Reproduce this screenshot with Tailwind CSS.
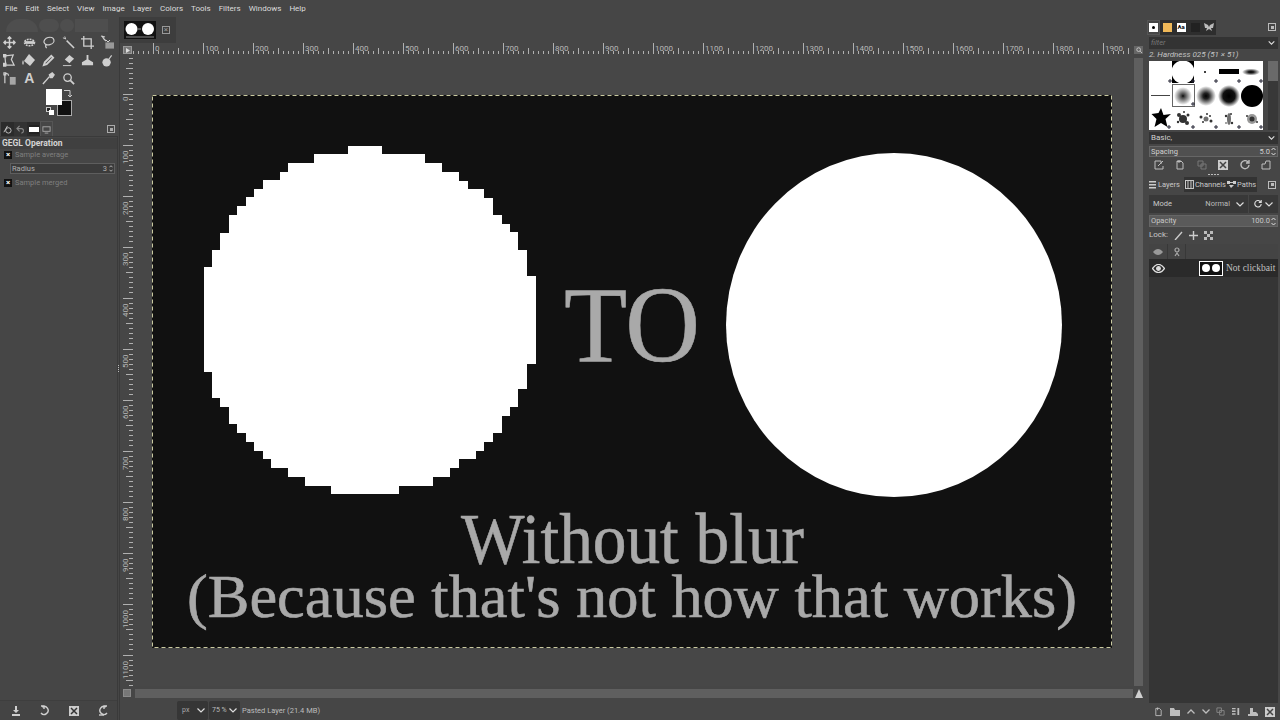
<!DOCTYPE html>
<html lang="en">
<head>
  <meta charset="UTF-8">
  <title>GIMP</title>
  <script src="https://cdn.jsdelivr.net/npm/@tailwindcss/browser@4"></script>
</head>
<body class="bg-[#464646]">
<div class="w-[1280px] h-[720px] overflow-hidden flex flex-col bg-[#464646] text-[#d0d0d0] font-['Roboto',sans-serif] text-[7.5px]">

  <!-- menu -->
  <div class="h-[17px] shrink-0 flex items-center gap-[8px] pl-[5px] text-[8px] text-[#dcdcdc]">
    <span>File</span><span>Edit</span><span>Select</span><span>View</span><span>Image</span><span>Layer</span><span>Colors</span><span>Tools</span><span>Filters</span><span>Windows</span><span>Help</span>
  </div>

  <div class="flex flex-1 min-h-0">

    <!-- left dock -->
    <aside class="w-[118px] shrink-0 flex flex-col">
      <div class="h-[16px] shrink-0 flex items-center gap-[1px] pl-[6px] opacity-40">
        <div class="w-[32px] h-[13px] rounded-t-full bg-[#5a5a5a]"></div>
        <div class="w-[20px] h-[13px] rounded-full bg-[#5a5a5a]"></div>
        <div class="w-[14px] h-[13px] rounded-full bg-[#5a5a5a]"></div>
        <div class="w-[33px] h-[13px] bg-[#5a5a5a]"></div>
      </div>
      <!-- tools -->
      <div class="grid grid-cols-6 w-[117px] auto-rows-[18px] text-[#cfcfcf]">
        <div class="flex items-center justify-center"><svg class="w-[13px] h-[13px]" viewBox="0 0 14 14" fill="none" stroke="currentColor" stroke-width="1.6"><path d="M7 1v12M1 7h12M5 3l2-2 2 2M5 11l2 2 2-2M3 5L1 7l2 2M11 5l2 2-2 2"/></svg></div>
        <div class="flex items-center justify-center"><svg class="w-[13px] h-[13px]" viewBox="0 0 14 14" fill="none" stroke="currentColor" stroke-width="1.5"><ellipse cx="7" cy="7" rx="5.5" ry="3.5" stroke-dasharray="2 1"/><path d="M2 7h10" stroke-width="3"/></svg></div>
        <div class="flex items-center justify-center"><svg class="w-[13px] h-[13px]" viewBox="0 0 14 14" fill="none" stroke="currentColor" stroke-width="1.3"><ellipse cx="7.5" cy="5.5" rx="5.5" ry="4" transform="rotate(-15 7.5 5.5)"/><path d="M5 9c-2 1-1 3 0 4"/></svg></div>
        <div class="flex items-center justify-center"><svg class="w-[13px] h-[13px]" viewBox="0 0 14 14" fill="none" stroke="currentColor" stroke-width="1.6"><path d="M5 5l8 8"/><path d="M1 2l3 1M3 0.500l1 3" stroke-width="1"/></svg></div>
        <div class="flex items-center justify-center"><svg class="w-[13px] h-[13px]" viewBox="0 0 14 14" fill="none" stroke="currentColor" stroke-width="1.4"><path d="M3 0v11h11M0 3h11v11"/></svg></div>
        <div class="flex items-center justify-center"><svg class="w-[14px] h-[14px]" viewBox="0 0 14 14" fill="none" stroke="currentColor" stroke-width="1.2"><path d="M1 1l4 1M2 1l2 3l2 2"/><rect x="6" y="8" width="8" height="5" fill="currentColor" opacity=".6"/><path d="M6 5l2 2l2-2" stroke-width="1"/></svg></div>

        <div class="flex items-center justify-center"><svg class="w-[13px] h-[13px]" viewBox="0 0 14 14" fill="none" stroke="currentColor" stroke-width="1.3"><path d="M2 2l9-1l-2 5l3 6l-9 0z"/><path d="M0 0h3v3H0zM0 10h3v3H0z" fill="currentColor"/></svg></div>
        <div class="flex items-center justify-center"><svg class="w-[14px] h-[14px]" viewBox="0 0 14 14" fill="currentColor"><path d="M7 1l6 6-5 6-6-5z"/><path d="M1 7c-1 2-1 4 0 5 1-1 1-3 0-5z"/></svg></div>
        <div class="flex items-center justify-center"><svg class="w-[13px] h-[13px]" viewBox="0 0 14 14" fill="none" stroke="currentColor" stroke-width="2"><path d="M2 12l1-3 7-7 2 2-7 7z"/></svg></div>
        <div class="flex items-center justify-center"><svg class="w-[13px] h-[13px]" viewBox="0 0 14 14" fill="currentColor"><path d="M8 1l5 4-5 5-5-4z"/><path d="M1 12h9v1H1z"/></svg></div>
        <div class="flex items-center justify-center"><svg class="w-[13px] h-[13px]" viewBox="0 0 14 14" fill="currentColor"><path d="M6 1h2v5l5 3v3H1V9l5-3z"/></svg></div>
        <div class="flex items-center justify-center"><svg class="w-[13px] h-[13px]" viewBox="0 0 14 14" fill="currentColor"><circle cx="6" cy="9" r="4.500"/><path d="M8 5l3-4 1 1-3 4z"/></svg></div>

        <div class="flex items-center justify-center"><svg class="w-[13px] h-[13px]" viewBox="0 0 14 14" fill="none" stroke="currentColor" stroke-width="1.3"><path d="M2 12V3c0-2 4-2 4 1"/><path d="M1 1h2v2H1z"/><rect x="8" y="6" width="5" height="7" fill="currentColor" opacity=".7"/></svg></div>
        <div class="flex items-center justify-center"><span class="font-['Liberation_Sans',sans-serif] font-bold text-[14px] leading-none">A</span></div>
        <div class="flex items-center justify-center"><svg class="w-[13px] h-[13px]" viewBox="0 0 14 14" fill="none" stroke="currentColor" stroke-width="1.500"><path d="M1 13l7-8"/><path d="M8 3l3-2 2 2-2 3-2 0z" fill="currentColor"/></svg></div>
        <div class="flex items-center justify-center"><svg class="w-[13px] h-[13px]" viewBox="0 0 14 14" fill="none" stroke="currentColor" stroke-width="1.400"><circle cx="6" cy="6" r="4"/><path d="M9 9l4 4" stroke-width="2"/></svg></div>
      </div>
      <!-- colours -->
      <div class="relative h-[30px] mt-[2px] ml-[46px] w-[28px] shrink-0">
        <div class="absolute left-[11px] top-[11px] w-[15px] h-[16px] bg-[#111] border border-[#aaa]"></div>
        <div class="absolute left-0 top-0 w-[16px] h-[16px] bg-white"></div>
        <svg class="absolute left-[18px] top-0 w-[8px] h-[9px]" viewBox="0 0 8 9" fill="none" stroke="#ccc"><path d="M0 1.500h6v6M4 6l2 2 2-2"/></svg>
        <div class="absolute left-0 top-[18px] w-[5px] h-[5px] border border-[#ccc] bg-[#222]"></div>
        <div class="absolute left-[3px] top-[21px] w-[5px] h-[5px] bg-white"></div>
      </div>
      <!-- dock tabs -->
      <div class="h-[14px] mt-[3px] shrink-0 flex items-center pl-[1px]">
        <div class="w-[13px] h-[14px] bg-[#2b2b2b] flex items-center justify-center"><svg class="w-[9px] h-[9px]" viewBox="0 0 10 10" fill="none" stroke="#ccc"><circle cx="6" cy="6" r="3"/><path d="M1 8L5 1"/></svg></div>
        <div class="w-[13px] h-[14px] bg-[#333] flex items-center justify-center"><svg class="w-[9px] h-[9px]" viewBox="0 0 10 10" fill="none" stroke="#888" stroke-width="1.200"><path d="M4 1L1 4l3 3M1 4h5c3 0 3 5 0 5"/></svg></div>
        <div class="w-[13px] h-[14px] bg-[#2b2b2b] flex items-center justify-center"><div class="w-[10px] h-[9px] bg-white border-y-2 border-[#222]"></div></div>
        <div class="w-[13px] h-[16px] bg-[#464646] border border-b-0 border-[#555] flex items-center justify-center"><svg class="w-[9px] h-[9px]" viewBox="0 0 10 10" fill="none" stroke="#aaa"><rect x="1" y="2" width="8" height="5"/><path d="M3 9h4"/></svg></div>
        <div class="ml-auto mr-[3px] w-[8px] h-[8px] border border-[#aaa] flex items-center justify-center"><div class="w-[3px] h-[3px] bg-[#aaa]"></div></div>
      </div>
      <!-- gegl panel -->
      <div class="border-t border-r border-[#3a3a3a] flex-1 flex flex-col min-h-0">
        <div class="h-[11px] mt-[1px] pl-[2px] bg-[#404040] font-bold text-[8.5px] text-[#d4d4d4] flex items-center">GEGL Operation</div>
        <div class="h-[12px] pl-[4px] flex items-center gap-[3px] text-[#7f7f7f]"><span class="w-[8px] h-[8px] bg-[#111] text-white flex items-center justify-center text-[8px] font-bold leading-none">×</span>Sample average</div>
        <div class="h-[11px] ml-[10px] mr-[2px] mt-[2px] px-[1px] bg-[#3b3b3b] border border-[#5e5e5e] flex items-center justify-between text-[#b0b0b0]"><span>Radius</span><span class="flex items-center gap-[2px]">3<svg class="w-[4px] h-[9px]" viewBox="0 0 5 9" fill="none" stroke="#ccc"><path d="M0.500 3l2-2 2 2M0.500 6l2 2 2-2"/></svg></span></div>
        <div class="h-[12px] mt-[3px] pl-[4px] flex items-center gap-[3px] text-[#7f7f7f]"><span class="w-[8px] h-[8px] bg-[#111] text-white flex items-center justify-center text-[8px] font-bold leading-none">×</span>Sample merged</div>
        <div class="mt-auto h-[20px] border-t border-[#3e3e3e] bg-[#444] flex items-center text-[#cfcfcf] pl-[10px] gap-[17px]">
          <svg class="w-[12px] h-[12px]" viewBox="0 0 12 12" fill="currentColor"><path d="M5 1h2v4h2L6 8 3 5h2zM2 9h8v2H2z"/></svg>
          <svg class="w-[12px] h-[12px]" viewBox="0 0 12 12" fill="none" stroke="currentColor" stroke-width="1.400"><path d="M2 1h3v3M3 2a4 4 0 1 1-1 6"/></svg>
          <svg class="w-[12px] h-[12px]" viewBox="0 0 12 12"><rect x="1" y="1" width="10" height="10" fill="#ccc"/><path d="M3 3l6 6M9 3l-6 6" stroke="#333" stroke-width="1.500"/></svg>
          <svg class="w-[12px] h-[12px]" viewBox="0 0 12 12" fill="none" stroke="currentColor" stroke-width="1.400"><path d="M10 1H7v3M9 2a4 4 0 1 0 1 6"/><path d="M2 10h5"/></svg>
        </div>
      </div>
    </aside>

    <!-- sash -->
    <div class="w-[2px] shrink-0 flex flex-col items-center justify-center gap-[1px] border-r border-[#3a3a3a]">
      <i class="w-[1px] h-[1px] bg-[#bbb]"></i><i class="w-[1px] h-[1px] bg-[#bbb]"></i><i class="w-[1px] h-[1px] bg-[#bbb]"></i><i class="w-[1px] h-[1px] bg-[#bbb]"></i>
    </div>

    <!-- centre -->
    <main class="w-[1026px] shrink-0 flex flex-col">
      <!-- image tab -->
      <div class="h-[26px] shrink-0 flex">
        <div class="w-[56px] h-[26px] bg-[#3d3d3d] flex items-center gap-[6px] pl-[4px]">
          <svg class="w-[32px] h-[18px]" viewBox="0 0 32 18"><rect width="32" height="18" fill="#111"/><circle cx="7.500" cy="8" r="6" fill="#fff"/><circle cx="24" cy="8" r="6" fill="#fff"/><path d="M14 8h3" stroke="#999"/><path d="M2 16h28" stroke="#888"/></svg>
          <div class="w-[8px] h-[8px] border border-[#999] flex items-center justify-center text-[#999] text-[8px] leading-none">×</div>
        </div>
      </div>
      <!-- ruler row -->
      <div class="h-[11px] shrink-0 flex">
        <div class="w-[13px] shrink-0 pl-[3px] pt-[3px]"><div class="w-[9px] h-[8px] bg-[#777] border border-[#999] flex items-center justify-center"><svg class="w-[4px] h-[5px]" viewBox="0 0 4 5" fill="#ddd"><path d="M0 0l4 2.500L0 5z"/></svg></div></div>
        <svg class="w-[1000px] h-[11px] shrink-0" viewBox="0 0 1000 11" fill="#b8b8b8" font-size="8">
          <defs><pattern id="tx" x="20" y="0" width="50" height="11" patternUnits="userSpaceOnUse"><path d="M.5 0v11M5.500 8v3M10.500 8v3M15.500 8v3M20.500 8v3M25.500 5v6M30.500 8v3M35.500 8v3M40.500 8v3M45.500 8v3" stroke="#b0b0b0"/></pattern></defs>
          <rect width="1000" height="11" fill="url(#tx)"/>
          <text x="22" y="8">0</text><text x="72" y="8">100</text><text x="122" y="8">200</text><text x="172" y="8">300</text><text x="222" y="8">400</text><text x="272" y="8">500</text><text x="322" y="8">600</text><text x="372" y="8">700</text><text x="422" y="8">800</text><text x="472" y="8">900</text><text x="522" y="8">1000</text><text x="572" y="8">1100</text><text x="622" y="8">1200</text><text x="672" y="8">1300</text><text x="722" y="8">1400</text><text x="772" y="8">1500</text><text x="822" y="8">1600</text><text x="872" y="8">1700</text><text x="922" y="8">1800</text><text x="972" y="8">1900</text>
        </svg>
        <div class="ml-[1px] mt-[3px] w-[9px] h-[8px] bg-[#666] flex items-center justify-center"><svg class="w-[6px] h-[6px]" viewBox="0 0 8 8" fill="none" stroke="#ddd"><circle cx="3.500" cy="3.500" r="2.500"/><path d="M5.500 5.500L8 8"/></svg></div>
      </div>
      <!-- canvas row -->
      <div class="flex h-[632px] shrink-0">
        <svg class="w-[13px] h-[632px] shrink-0" viewBox="0 0 13 632" fill="#b8b8b8" font-size="8">
          <defs><pattern id="ty" x="0" y="-11" width="13" height="51" patternUnits="userSpaceOnUse"><path d="M3 .5h10M9 5.500h4M9 10.500h4M9 15.500h4M9 20.500h4M6 25.500h7M9 30.500h4M9 35.500h4M9 40.500h4M9 45.500h4" stroke="#b0b0b0"/></pattern></defs>
          <rect width="13" height="632" fill="url(#ty)"/>
          <text transform="translate(8 47) rotate(-90)">0</text><text transform="translate(8 110) rotate(-90)">100</text><text transform="translate(8 161) rotate(-90)">200</text><text transform="translate(8 212) rotate(-90)">300</text><text transform="translate(8 263) rotate(-90)">400</text><text transform="translate(8 314) rotate(-90)">500</text><text transform="translate(8 365) rotate(-90)">600</text><text transform="translate(8 416) rotate(-90)">700</text><text transform="translate(8 467) rotate(-90)">800</text><text transform="translate(8 518) rotate(-90)">900</text><text transform="translate(8 574) rotate(-90)">1000</text><text transform="translate(8 625) rotate(-90)">1100</text>
        </svg>
        <div class="w-[1000px] h-[632px] shrink-0 pl-[19px] pt-[41px] bg-[#474747]">
          <!-- the opened image, in page coordinates -->
          <svg class="w-[960px] h-[553px] block" viewBox="152 95 960 553">
            <rect x="152" y="95" width="960" height="553" fill="#111"/>
            <rect x="152.500" y="95.500" width="959" height="552" fill="none" stroke="#c9c9a0" stroke-dasharray="4 3"/>
            <path fill="#fff" d="M348 146H382V154H425V163H442V172H459V181H468V189H484V198H493V215H502V224H510V232H518V250H527V276H536V364H527V389H518V407H510V416H502V433H493V442H484V451H476V459H459V468H450V477H433V486H399V494H331V486H305V477H288V468H271V459H263V451H254V442H246V433H237V424H229V407H220V398H212V372H204V267H212V250H220V233H229V215H237V206H246V197H254V189H263V180H280V172H288V163H314V154H348Z"/>
            <ellipse cx="894" cy="325" rx="168" ry="172" fill="#fff"/>
            <g fill="#a9a9a9" stroke="#a9a9a9" stroke-width=".6" class="font-['Liberation_Serif',serif]">
              <text x="564" y="361" font-size="108" textLength="136" lengthAdjust="spacingAndGlyphs">TO</text>
              <text x="461" y="563" font-size="72" textLength="343" lengthAdjust="spacingAndGlyphs">Without blur</text>
              <text x="187" y="617" font-size="62" textLength="890" lengthAdjust="spacingAndGlyphs">(Because that's not how that works)</text>
            </g>
          </svg>
        </div>
        <div class="ml-[1px] mt-[4px] w-[9px] h-[628px] bg-[#5f5f5f]"></div>
      </div>
      <!-- h scroll -->
      <div class="h-[10px] mt-[2px] shrink-0 flex items-center">
        <div class="ml-[3px] w-[8px] h-[8px] bg-[#777] border border-[#8a8a8a]"></div>
        <div class="ml-[4px] w-[998px] h-[9px] bg-[#5f5f5f]"></div>
        <svg class="ml-[1px] w-[10px] h-[9px]" viewBox="0 0 10 9" fill="#d0d0d0"><path d="M5 0l4 9H1z"/></svg>
      </div>
      <!-- status -->
      <div class="flex-1 flex items-end pl-[57px] text-[#bdbdbd]">
        <div class="w-[31px] h-[19px] bg-[#363636] rounded-[2px] flex items-center justify-between pl-[5px] pr-[3px] text-[7px] text-[#aaa]">px<svg class="w-[8px] h-[5px]" viewBox="0 0 8 5" fill="none" stroke="#ddd" stroke-width="1.200"><path d="M0.500 0.500L4 4l3.500-3.500"/></svg></div>
        <div class="ml-[1px] w-[31px] h-[19px] bg-[#363636] rounded-[2px] flex items-center justify-between pl-[3px] pr-[3px] text-[7px] text-[#bbb]">75 %<svg class="w-[8px] h-[5px]" viewBox="0 0 8 5" fill="none" stroke="#ddd" stroke-width="1.200"><path d="M0.500 0.500L4 4l3.500-3.500"/></svg></div>
        <span class="ml-[2px] h-[19px] flex items-center text-[7.5px]">Pasted Layer (21.4 MB)</span>
      </div>
    </main>

    <!-- right dock -->
    <aside class="w-[134px] shrink-0 pl-[1px] flex flex-col text-[#c8c8c8]">
      <!-- brush tabs -->
      <div class="h-[16px] mt-[2px] shrink-0 flex items-center">
        <div class="w-[13px] h-[15px] bg-[#464646] border border-[#555] flex items-center justify-center"><div class="w-[9px] h-[9px] bg-white flex items-center justify-center"><div class="w-[3px] h-[3px] rounded-full bg-black"></div></div></div>
        <div class="w-[14px] h-[15px] bg-[#2e2e2e] flex items-center justify-center"><div class="w-[9px] h-[9px] bg-[#f0b858]"></div></div>
        <div class="w-[14px] h-[15px] bg-[#2e2e2e] flex items-center justify-center"><div class="w-[9px] h-[9px] bg-white text-black text-[6px] font-bold leading-none flex items-center justify-center">Aa</div></div>
        <div class="w-[14px] h-[15px] bg-[#2e2e2e] flex items-center justify-center"><div class="w-[9px] h-[9px] bg-[#222]"></div></div>
        <div class="w-[14px] h-[15px] bg-[#2e2e2e] flex items-center justify-center"><svg class="w-[10px] h-[10px]" viewBox="0 0 10 10" fill="#bbb"><path d="M0 1l4 2 1 2 1-2 4-2-1 5-2 0 1 3-3-2-3 2 1-3-2 0z"/></svg></div>
        <div class="ml-auto mr-[4px] w-[8px] h-[8px] border border-[#bbb] flex items-center justify-center"><div class="w-[3px] h-[3px] bg-[#bbb]"></div></div>
      </div>
      <div class="h-[12px] mt-[2px] mx-[2px] bg-[#333] flex items-center justify-between pl-[2px] pr-[3px] italic text-[#777]">filter<svg class="w-[7px] h-[4px]" viewBox="0 0 8 5" fill="none" stroke="#ddd" stroke-width="1.400"><path d="M0.500 0.500L4 4l3.500-3.500"/></svg></div>
      <div class="h-[12px] ml-[2px] flex items-center italic text-[8px] text-[#c4c4c4]">2. Hardness 025 (51 × 51)</div>
      <!-- brush grid -->
      <div class="h-[70px] ml-[2px] flex shrink-0">
        <svg class="w-[114px] h-[69px] bg-white" viewBox="0 0 114 69">
          <defs>
            <radialGradient id="s1"><stop offset="0" stop-color="#000"/><stop offset=".12" stop-color="#333"/><stop offset="1" stop-color="#fff"/></radialGradient>
            <radialGradient id="s2"><stop offset="0" stop-color="#000"/><stop offset=".3" stop-color="#222"/><stop offset="1" stop-color="#fff"/></radialGradient>
            <radialGradient id="s3"><stop offset="0" stop-color="#000"/><stop offset=".55" stop-color="#111"/><stop offset="1" stop-color="#fff"/></radialGradient>
          </defs>
          <rect x="23" y="0" width="22" height="22" fill="#000"/>
          <circle cx="34" cy="11" r="11.500" fill="#fff"/>
          <circle cx="56" cy="11" r="1" fill="#000"/>
          <rect x="70" y="8" width="20" height="5" fill="#000"/>
          <ellipse cx="102" cy="11" rx="9" ry="3.500" fill="url(#s2)"/>
          <path d="M2 34.500h19" stroke="#444"/>
          <rect x="23.500" y="23.500" width="22" height="22" fill="#fff" stroke="#666"/>
          <circle cx="34" cy="35" r="9" fill="url(#s1)"/>
          <circle cx="57" cy="35" r="10" fill="url(#s2)"/>
          <circle cx="80" cy="35" r="11" fill="url(#s3)"/>
          <circle cx="103" cy="35" r="11" fill="#000"/>
          <path d="M12 47l2.500 7 7.500-1-5.500 5 2 8-6.500-4-6.500 4 2-8-5-5 7-1z" fill="#000"/>
          <g fill="#333">
            <circle cx="34" cy="58" r="4"/><circle cx="30" cy="54" r="2"/><circle cx="38" cy="62" r="2"/><circle cx="39" cy="54" r="1.500"/><circle cx="29" cy="61" r="1.200"/><circle cx="35" cy="51" r="1"/>
            <circle cx="57" cy="58" r="2.500" opacity=".7"/><circle cx="52" cy="56" r="1.500"/><circle cx="62" cy="60" r="1.500"/><circle cx="58" cy="53" r="1"/><circle cx="54" cy="61" r="1"/><circle cx="61" cy="55" r="1"/>
            <ellipse cx="80" cy="58" rx="2" ry="6" opacity=".7"/><circle cx="77" cy="55" r="1.200"/><circle cx="83" cy="62" r="1.200"/><circle cx="82" cy="53" r="1"/><circle cx="77" cy="62" r=".8"/>
            <circle cx="103" cy="58" r="5" opacity=".5"/><circle cx="103" cy="58" r="2.500"/><circle cx="98" cy="55" r="1"/><circle cx="108" cy="61" r="1"/>
          </g>
          <path d="M19 20h4M21 18v4M42 20h4M44 18v4M65 20h4M67 18v4M88 20h4M90 18v4M110 20h4M112 18v4M42 43h4M44 41v4M18 66h4M20 64v4M42 66h4M44 64v4M65 66h4M67 64v4M88 66h4M90 64v4M110 66h4M112 64v4" stroke="#223" fill="none"/>
        </svg>
        <div class="ml-[5px] w-[10px] h-[69px] bg-[#383838]"><div class="h-[20px] bg-[#6a6a6a]"></div></div>
      </div>
      <div class="h-[12px] mt-[1px] mx-[2px] bg-[#333] flex items-center justify-between pl-[2px] pr-[3px] text-[8px] text-[#d0d0d0]">Basic,<svg class="w-[7px] h-[4px]" viewBox="0 0 8 5" fill="none" stroke="#ddd" stroke-width="1.400"><path d="M0.500 0.500L4 4l3.500-3.500"/></svg></div>
      <div class="h-[11px] mt-[2px] mx-[2px] bg-[#505050] border border-[#666] flex items-center justify-between px-[1px] text-[#d0d0d0]"><span>Spacing</span><span class="flex items-center gap-[1px]">5.0<svg class="w-[5px] h-[9px]" viewBox="0 0 5 9" fill="none" stroke="#ddd"><path d="M0.500 3l2-2 2 2M0.500 6l2 2 2-2"/></svg></span></div>
      <!-- brush actions -->
      <div class="h-[14px] mt-[1px] shrink-0 flex items-center justify-between pl-[7px] pr-[9px] text-[#bdbdbd]">
        <svg class="w-[10px] h-[10px]" viewBox="0 0 10 10" fill="none" stroke="currentColor"><path d="M1 1h6v3M1 1v8h8V6M4 6l5-5"/></svg>
        <svg class="w-[10px] h-[10px]" viewBox="0 0 10 10" fill="none" stroke="currentColor"><path d="M2 1h4l2 2v6H2zM4 0v3M2 1.500h4"/></svg>
        <svg class="w-[10px] h-[10px]" viewBox="0 0 10 10" fill="none" stroke="#777"><path d="M1 1h5v5H1zM4 4h5v5H4z"/></svg>
        <svg class="w-[10px] h-[10px]" viewBox="0 0 10 10"><rect width="10" height="10" fill="#ccc"/><path d="M2 2l6 6M8 2L2 8" stroke="#444" stroke-width="1.500"/></svg>
        <svg class="w-[10px] h-[10px]" viewBox="0 0 10 10" fill="none" stroke="currentColor" stroke-width="1.400"><path d="M9 5a4 4 0 1 1-1-3M9 0v3H6"/></svg>
        <svg class="w-[10px] h-[10px]" viewBox="0 0 10 10" fill="none" stroke="currentColor"><path d="M1 9V4h3l1-3h4v8z"/></svg>
      </div>
      <div class="h-[5px] shrink-0 flex items-center justify-center gap-[1px]"><i class="w-[2px] h-[1px] bg-[#bbb]"></i><i class="w-[2px] h-[1px] bg-[#bbb]"></i><i class="w-[2px] h-[1px] bg-[#bbb]"></i><i class="w-[2px] h-[1px] bg-[#bbb]"></i></div>
      <!-- layer tabs -->
      <div class="h-[15px] shrink-0 flex items-center pl-[1px]">
        <div class="w-[36px] h-[15px] bg-[#464646] flex items-center gap-[2px] pl-[1px]"><svg class="w-[7px] h-[9px]" viewBox="0 0 7 9" fill="#ccc"><path d="M0 1h7v1.500H0zM0 4h7v1.500H0zM0 7h7v1.500H0z"/></svg>Layers</div>
        <div class="w-[42px] h-[15px] bg-[#333] flex items-center gap-[1px] pl-[1px]"><svg class="w-[9px] h-[9px]" viewBox="0 0 9 9" fill="none" stroke="#ccc"><rect x=".5" y=".5" width="8" height="8"/><path d="M3 1v7M6 1v7"/></svg>Channels</div>
        <div class="w-[31px] h-[15px] bg-[#333] flex items-center gap-[1px] pl-[1px]"><svg class="w-[9px] h-[7px]" viewBox="0 0 9 7" fill="#ccc"><path d="M0 0h3v3H0zM6 0h3v3H6zM3 1h3v1H3zM2 4l2 3 3-3z"/></svg>Paths</div>
        <div class="ml-auto mr-[4px] w-[8px] h-[8px] border border-[#bbb] flex items-center justify-center"><div class="w-[3px] h-[3px] bg-[#bbb]"></div></div>
      </div>
      <!-- mode -->
      <div class="h-[18px] mt-[3px] mx-[2px] flex shrink-0">
        <div class="w-[99px] bg-[#383838] flex items-center justify-between pl-[4px] pr-[4px]"><span>Mode</span><span class="flex items-center gap-[6px] text-[#bbb]">Normal<svg class="w-[8px] h-[5px]" viewBox="0 0 8 5" fill="none" stroke="#ddd" stroke-width="1.200"><path d="M0.500 0.500L4 4l3.500-3.500"/></svg></span></div>
        <div class="ml-[1px] flex-1 bg-[#383838] flex items-center justify-center gap-[3px]"><svg class="w-[8px] h-[8px]" viewBox="0 0 10 10" fill="none" stroke="#ddd" stroke-width="1.400"><path d="M9 5a4 4 0 1 1-1-3M9 0v3H6"/></svg><svg class="w-[8px] h-[5px]" viewBox="0 0 8 5" fill="none" stroke="#ddd" stroke-width="1.200"><path d="M0.500 0.500L4 4l3.500-3.500"/></svg></div>
      </div>
      <div class="h-[12px] mt-[2px] mx-[2px] bg-[#5a5a5a] border border-[#666] flex items-center justify-between px-[1px]"><span>Opacity</span><span class="flex items-center gap-[1px]">100.0<svg class="w-[5px] h-[9px]" viewBox="0 0 5 9" fill="none" stroke="#ddd"><path d="M0.500 3l2-2 2 2M0.500 6l2 2 2-2"/></svg></span></div>
      <div class="h-[16px] ml-[2px] flex items-center gap-[6px] shrink-0 text-[8px]"><span>Lock:</span>
        <svg class="w-[9px] h-[9px]" viewBox="0 0 9 9" fill="none" stroke="#ccc" stroke-width="1.400"><path d="M1 9L8 1"/></svg>
        <svg class="w-[9px] h-[9px]" viewBox="0 0 9 9" fill="none" stroke="#ccc" stroke-width="1.400"><path d="M4.500 0v9M0 4.500h9"/></svg>
        <svg class="w-[9px] h-[9px]" viewBox="0 0 9 9" fill="#bbb"><path d="M0 0h3v3H0zM6 0h3v3H6zM3 3h3v3H3zM0 6h3v3H0zM6 6h3v3H6z"/></svg>
      </div>
      <!-- layer list -->
      <div class="flex-1 mt-[1px] ml-[2px] mr-[2px] bg-[#353535] flex flex-col min-h-0">
        <div class="h-[15px] bg-[#444] flex items-center shrink-0">
          <div class="w-[19px] h-full border-r border-[#383838] flex items-center justify-center"><svg class="w-[10px] h-[6px]" viewBox="0 0 10 6" fill="#999"><path d="M0 3c3-4 7-4 10 0-3 4-7 4-10 0z"/></svg></div>
          <div class="w-[18px] h-full border-r border-[#383838] flex items-center justify-center"><svg class="w-[6px] h-[10px]" viewBox="0 0 6 10" fill="none" stroke="#aaa" stroke-width="1.200"><circle cx="3" cy="3" r="2"/><path d="M1 9l2-3 2 3"/></svg></div>
        </div>
        <div class="h-[18px] bg-[#2a2a2a] flex items-center shrink-0">
          <div class="w-[19px] flex items-center justify-center"><svg class="w-[13px] h-[9px]" viewBox="0 0 13 9" fill="none" stroke="#ddd" stroke-width="1.300"><path d="M.5 4.500c4-5.500 8-5.500 12 0-4 5.500-8 5.500-12 0z"/><circle cx="6.500" cy="4.500" r="1.800" fill="#ddd"/></svg></div>
          <div class="ml-[31px] w-[24px] h-[15px] shrink-0 border border-white bg-[#111] flex items-center justify-center gap-[2px]"><i class="w-[8px] h-[8px] rounded-full bg-white"></i><i class="w-[8px] h-[8px] rounded-full bg-white"></i></div>
          <span class="ml-[3px] font-['Liberation_Serif',serif] text-[#c0c0c0] text-[9.5px] whitespace-nowrap">Not clickbait</span>
        </div>
      </div>
      <div class="h-[17px] shrink-0 flex items-center justify-between pl-[7px] pr-[5px] text-[#bdbdbd]">
        <svg class="w-[9px] h-[10px]" viewBox="0 0 10 10" fill="none" stroke="currentColor"><path d="M2 1h4l2 2v6H2zM4 0v3"/></svg>
        <svg class="w-[10px] h-[10px]" viewBox="0 0 10 10" fill="currentColor"><path d="M0 1h4l1 2h5v6H0z"/></svg>
        <svg class="w-[8px] h-[5px]" viewBox="0 0 8 5" fill="none" stroke="currentColor" stroke-width="1.300"><path d="M.5 4.500L4 1l3.500 3.500"/></svg>
        <svg class="w-[8px] h-[5px]" viewBox="0 0 8 5" fill="none" stroke="currentColor" stroke-width="1.300"><path d="M.5 .5L4 4l3.500-3.500"/></svg>
        <svg class="w-[9px] h-[9px]" viewBox="0 0 10 10" fill="none" stroke="#888"><path d="M1 1h5v5H1zM4 4h5v5H4z"/></svg>
        <svg class="w-[9px] h-[9px]" viewBox="0 0 10 10" fill="currentColor"><path d="M0 1h4v1.500H0zM0 4h4v1.500H0zM0 7h4v1.500H0zM6 1h2v8H6z"/></svg>
        <svg class="w-[10px] h-[10px]" viewBox="0 0 10 10" fill="currentColor"><path d="M2 1h3v4h3l2 2v2H0V7h2z"/></svg>
        <svg class="w-[10px] h-[10px]" viewBox="0 0 10 10"><rect width="10" height="10" fill="#ccc"/><path d="M2 2l6 6M8 2L2 8" stroke="#444" stroke-width="1.500"/></svg>
      </div>
    </aside>
  </div>
</div>
</body>
</html>
